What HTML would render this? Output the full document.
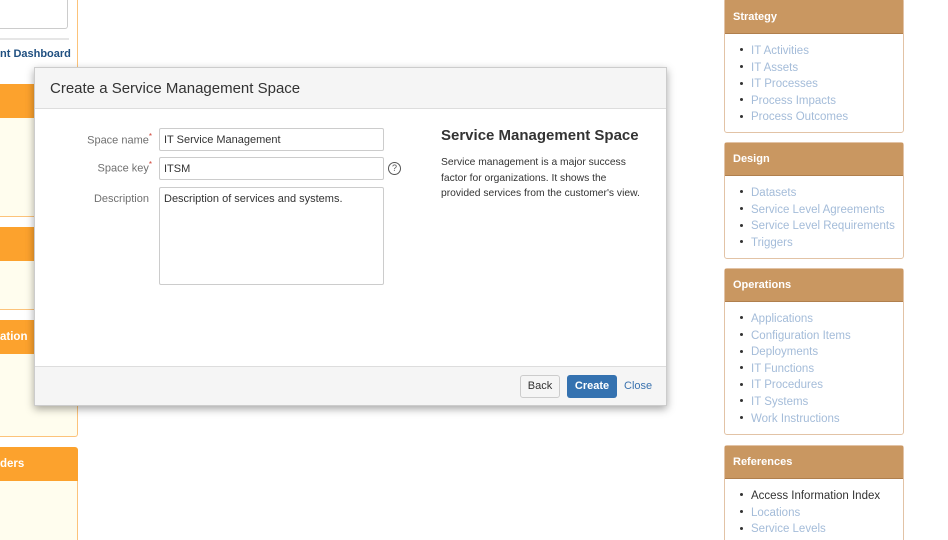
<!DOCTYPE html>
<html><head><meta charset="utf-8"><style>
*{box-sizing:border-box;margin:0;padding:0}
html,body{width:948px;height:540px;overflow:hidden}
body{background:#fff;font-family:"Liberation Sans",Arial,sans-serif;position:relative;font-size:11px}
.abs{position:absolute}
.lh{position:absolute;left:0;width:78px;background:#fca22d;color:#fff;font-weight:bold;font-size:11.5px;height:34px;line-height:34px;border-radius:0 3px 0 0}
.lb{position:absolute;left:0;width:78px;background:#fffdee;border:1px solid #fcc37a;border-left:none;border-top:none;border-radius:0 0 3px 0}
.rp{position:absolute;left:724px;width:180px;border:1px solid #e2c3a6;border-radius:3px;background:#fff}
.rp h4{background:#c99761;color:#fff;font-size:11px;font-weight:bold;height:33px;line-height:33px;padding-left:8px;border-bottom:1px solid #b07f4d}
.rp ul{list-style:none;padding:9px 0 0 15px}
.rp li{font-size:11.5px;color:#a4bcd9;height:16.6px;line-height:16px;white-space:nowrap}
.rp li:before{content:"";display:inline-block;width:3px;height:3px;background:#333;border-radius:50%;margin:0 8px 2px 0;vertical-align:middle}
.lbl{position:absolute;right:0;color:#707070;font-size:11px;text-align:right}
.inp{position:absolute;left:159px;width:225px;border:1px solid #ccc;border-radius:2px;font-size:11px;color:#333;padding-left:4px}
</style></head><body>
<div class="abs" style="left:0;top:-4px;width:68px;height:33px;border:1px solid #ccc;border-left:none;border-radius:0 0 3px 0"></div>
<div class="abs" style="left:0;top:38px;width:69px;height:2px;background:#e6e6e6"></div>
<div class="abs" style="left:77px;top:0;width:1px;height:74px;background:#fcc37a"></div>
<div class="abs" style="left:0;top:48px;color:#205081;font-size:11px;font-weight:bold;white-space:nowrap;">nt Dashboard</div>
<div class="lh" style="top:84px"></div><div class="lb" style="top:118px;height:99px"></div>
<div class="lh" style="top:227px"></div><div class="lb" style="top:261px;height:49px"></div>
<div class="lh" style="top:320px">ation</div><div class="lb" style="top:354px;height:83px"></div>
<div class="lh" style="top:447px">ders</div><div class="lb" style="top:481px;height:59px;border-bottom:none;border-radius:0"></div>

<div class="rp" style="top:-2px;height:135px"><h4 style="height:35px;line-height:37px">Strategy</h4><ul><li>IT Activities</li><li>IT Assets</li><li>IT Processes</li><li>Process Impacts</li><li>Process Outcomes</li></ul></div>
<div class="rp" style="top:142px;height:117px"><h4>Design</h4><ul><li>Datasets</li><li>Service Level Agreements</li><li>Service Level Requirements</li><li>Triggers</li></ul></div>
<div class="rp" style="top:268px;height:167px"><h4>Operations</h4><ul><li>Applications</li><li>Configuration Items</li><li>Deployments</li><li>IT Functions</li><li>IT Procedures</li><li>IT Systems</li><li>Work Instructions</li></ul></div>
<div class="rp" style="top:445px;height:95px;border-bottom:none;border-radius:3px 3px 0 0"><h4>References</h4><ul><li style="color:#333">Access Information Index</li><li>Locations</li><li>Service Levels</li></ul></div>

<div class="abs" style="left:34px;top:67px;width:633px;height:339px;background:#fff;border:1px solid #ccc;box-shadow:0 3px 8px rgba(0,0,0,.35)">
 <div style="height:41px;background:#f5f5f5;border-bottom:1px solid #ddd;font-size:15px;color:#333;padding:12px 0 0 15px">Create a Service Management Space</div>
 <div class="abs" style="left:0;top:64px;width:117px;height:20px"><span class="lbl" style="top:0">Space name<sup style="color:#d04437;font-size:8px">*</sup></span></div>
 <div class="abs" style="left:0;top:92px;width:117px;height:20px"><span class="lbl">Space key<sup style="color:#d04437;font-size:8px">*</sup></span></div>
 <div class="abs" style="left:0;top:125px;width:114px;"><span class="lbl">Description</span></div>
 <div class="inp" style="left:124px;top:60px;height:23px;line-height:22px">IT Service Management</div>
 <div class="inp" style="left:124px;top:89px;height:23px;line-height:22px">ITSM</div>
 <div class="abs" style="left:353px;top:94px;width:13px;height:13px;border:1px solid #555;border-radius:50%;font-size:9px;text-align:center;line-height:11px;color:#555">?</div>
 <div class="inp" style="left:124px;top:119px;height:98px;padding-top:5px">Description of services and systems.</div>
 <div class="abs" style="left:406px;top:59px;font-size:15px;font-weight:bold;color:#333">Service Management Space</div>
 <div class="abs" style="left:406px;top:87px;width:204px;font-size:10.3px;line-height:15.5px;color:#333">Service management is a major success factor for organizations. It shows the provided services from the customer's view.</div>
 <div class="abs" style="left:0;top:298px;width:631px;height:39px;background:#f5f5f5;border-top:1px solid #ddd">
  <div class="abs" style="left:485px;top:8px;width:40px;height:23px;border:1px solid #ccc;border-radius:3px;background:#f5f5f5;color:#333;text-align:center;line-height:21px;font-size:11px">Back</div>
  <div class="abs" style="left:532px;top:8px;width:50px;height:23px;border-radius:3px;background:#3572b0;color:#fff;font-weight:bold;text-align:center;line-height:23px;font-size:11px">Create</div>
  <div class="abs" style="left:589px;top:13px;color:#3b73af;font-size:11px">Close</div>
 </div>
</div>
</body></html>
